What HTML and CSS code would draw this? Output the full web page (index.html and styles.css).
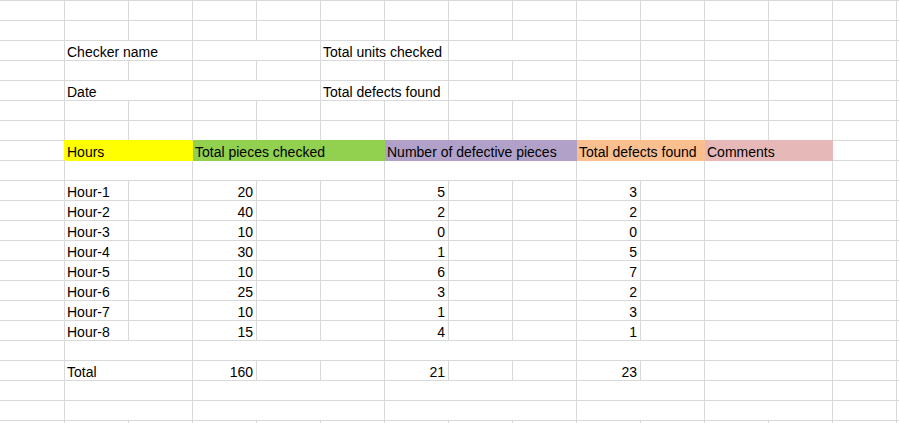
FILE: index.html
```html
<!DOCTYPE html>
<html>
<head>
<meta charset="utf-8">
<link rel="stylesheet" href="styles.css">
</head>
<body>
<div class="sheet">
  <!-- row 1 -->
  <div class="c"></div><div class="c"></div><div class="c"></div><div class="c"></div><div class="c"></div><div class="c"></div><div class="c"></div><div class="c"></div><div class="c"></div><div class="c"></div><div class="c"></div><div class="c"></div><div class="c"></div><div class="c"></div><div class="c"></div>
  <!-- row 2 -->
  <div class="c"></div><div class="c"></div><div class="c"></div><div class="c"></div><div class="c"></div><div class="c"></div><div class="c"></div><div class="c"></div><div class="c"></div><div class="c"></div><div class="c"></div><div class="c"></div><div class="c"></div><div class="c"></div><div class="c"></div>
  <!-- row 3 -->
  <div class="c"></div><div class="c s2">Checker name</div><div class="c s2"></div><div class="c s2">Total units checked</div><div class="c s2"></div><div class="c"></div><div class="c"></div><div class="c"></div><div class="c"></div><div class="c"></div><div class="c"></div>
  <!-- row 4 -->
  <div class="c"></div><div class="c"></div><div class="c"></div><div class="c"></div><div class="c"></div><div class="c"></div><div class="c"></div><div class="c"></div><div class="c"></div><div class="c"></div><div class="c"></div><div class="c"></div><div class="c"></div><div class="c"></div><div class="c"></div>
  <!-- row 5 -->
  <div class="c"></div><div class="c s2">Date</div><div class="c s2"></div><div class="c s2">Total defects found</div><div class="c s2"></div><div class="c"></div><div class="c"></div><div class="c"></div><div class="c"></div><div class="c"></div><div class="c"></div>
  <!-- row 6 -->
  <div class="c"></div><div class="c"></div><div class="c"></div><div class="c"></div><div class="c"></div><div class="c"></div><div class="c"></div><div class="c"></div><div class="c"></div><div class="c"></div><div class="c"></div><div class="c"></div><div class="c"></div><div class="c"></div><div class="c"></div>
  <!-- row 7 -->
  <div class="c"></div><div class="c"></div><div class="c"></div><div class="c"></div><div class="c"></div><div class="c"></div><div class="c"></div><div class="c"></div><div class="c"></div><div class="c"></div><div class="c"></div><div class="c"></div><div class="c"></div><div class="c"></div><div class="c"></div>
  <!-- row 8: header -->
  <div class="c"></div><div class="c s2 f-yellow">Hours</div><div class="c s3 f-green">Total pieces checked</div><div class="c s3 f-purple">Number of defective pieces</div><div class="c s2 f-orange">Total defects found</div><div class="c s2 f-pink">Comments</div><div class="c"></div><div class="c"></div>
  <!-- row 9 -->
  <div class="c"></div><div class="c s2"></div><div class="c s3"></div><div class="c s3"></div><div class="c s2"></div><div class="c s2"></div><div class="c"></div><div class="c"></div>
  <!-- data rows -->
  <div class="c"></div><div class="c">Hour-1</div><div class="c"></div><div class="c num">20</div><div class="c"></div><div class="c"></div><div class="c num">5</div><div class="c"></div><div class="c"></div><div class="c num">3</div><div class="c"></div><div class="c s2"></div><div class="c"></div><div class="c"></div>
  <div class="c"></div><div class="c">Hour-2</div><div class="c"></div><div class="c num">40</div><div class="c"></div><div class="c"></div><div class="c num">2</div><div class="c"></div><div class="c"></div><div class="c num">2</div><div class="c"></div><div class="c s2"></div><div class="c"></div><div class="c"></div>
  <div class="c"></div><div class="c">Hour-3</div><div class="c"></div><div class="c num">10</div><div class="c"></div><div class="c"></div><div class="c num">0</div><div class="c"></div><div class="c"></div><div class="c num">0</div><div class="c"></div><div class="c s2"></div><div class="c"></div><div class="c"></div>
  <div class="c"></div><div class="c">Hour-4</div><div class="c"></div><div class="c num">30</div><div class="c"></div><div class="c"></div><div class="c num">1</div><div class="c"></div><div class="c"></div><div class="c num">5</div><div class="c"></div><div class="c s2"></div><div class="c"></div><div class="c"></div>
  <div class="c"></div><div class="c">Hour-5</div><div class="c"></div><div class="c num">10</div><div class="c"></div><div class="c"></div><div class="c num">6</div><div class="c"></div><div class="c"></div><div class="c num">7</div><div class="c"></div><div class="c s2"></div><div class="c"></div><div class="c"></div>
  <div class="c"></div><div class="c">Hour-6</div><div class="c"></div><div class="c num">25</div><div class="c"></div><div class="c"></div><div class="c num">3</div><div class="c"></div><div class="c"></div><div class="c num">2</div><div class="c"></div><div class="c s2"></div><div class="c"></div><div class="c"></div>
  <div class="c"></div><div class="c">Hour-7</div><div class="c"></div><div class="c num">10</div><div class="c"></div><div class="c"></div><div class="c num">1</div><div class="c"></div><div class="c"></div><div class="c num">3</div><div class="c"></div><div class="c s2"></div><div class="c"></div><div class="c"></div>
  <div class="c"></div><div class="c">Hour-8</div><div class="c"></div><div class="c num">15</div><div class="c"></div><div class="c"></div><div class="c num">4</div><div class="c"></div><div class="c"></div><div class="c num">1</div><div class="c"></div><div class="c s2"></div><div class="c"></div><div class="c"></div>
  <!-- blank -->
  <div class="c"></div><div class="c s2"></div><div class="c s3"></div><div class="c s3"></div><div class="c s2"></div><div class="c s2"></div><div class="c"></div><div class="c"></div>
  <!-- total -->
  <div class="c"></div><div class="c s2">Total</div><div class="c num">160</div><div class="c"></div><div class="c"></div><div class="c num">21</div><div class="c"></div><div class="c"></div><div class="c num">23</div><div class="c"></div><div class="c s2"></div><div class="c"></div><div class="c"></div>
  <!-- blank rows -->
  <div class="c"></div><div class="c s2"></div><div class="c s3"></div><div class="c s3"></div><div class="c s2"></div><div class="c s2"></div><div class="c"></div><div class="c"></div>
  <div class="c"></div><div class="c s2"></div><div class="c s3"></div><div class="c s3"></div><div class="c s2"></div><div class="c s2"></div><div class="c"></div><div class="c"></div>
  <div class="c"></div><div class="c"></div><div class="c"></div><div class="c"></div><div class="c"></div><div class="c"></div><div class="c"></div><div class="c"></div><div class="c"></div><div class="c"></div><div class="c"></div><div class="c"></div><div class="c"></div><div class="c"></div><div class="c"></div>
</div>
</body>
</html>
```

FILE: styles.css
```css
html, body {
  margin: 0;
  padding: 0;
  background: #ffffff;
  overflow: hidden;
}

.sheet {
  display: grid;
  grid-template-columns: 65px repeat(13, 64px) 64px;
  grid-auto-rows: 20px;
  border-top: 1px solid #d9d9d9;
  width: 899px;
  height: 423px;
  overflow: hidden;
  font-family: "Liberation Sans", Arial, sans-serif;
  font-size: 14px;
  color: #000000;
}

.c {
  box-sizing: border-box;
  border-right: 1px solid #d9d9d9;
  border-bottom: 1px solid #d9d9d9;
  padding: 2px 3px 0 2px;
  line-height: 19px;
  white-space: nowrap;
  overflow: visible;
}

.s2 { grid-column: span 2; }
.s3 { grid-column: span 3; }

.num { text-align: right; }

.f-yellow { background: #ffff00; border-color: #ffff00; box-shadow: -1px -1px 0 0 #ffff00; }
.f-green  { background: #92d050; border-color: #92d050; box-shadow: 0 -1px 0 0 #92d050; }
.f-purple { background: #b1a0c7; border-color: #b1a0c7; box-shadow: 0 -1px 0 0 #b1a0c7; }
.f-orange { background: #fabf8f; border-color: #fabf8f; box-shadow: 0 -1px 0 0 #fabf8f; }
.f-pink   { background: #e6b8b7; border-color: #e6b8b7; box-shadow: 0 -1px 0 0 #e6b8b7; }
```
